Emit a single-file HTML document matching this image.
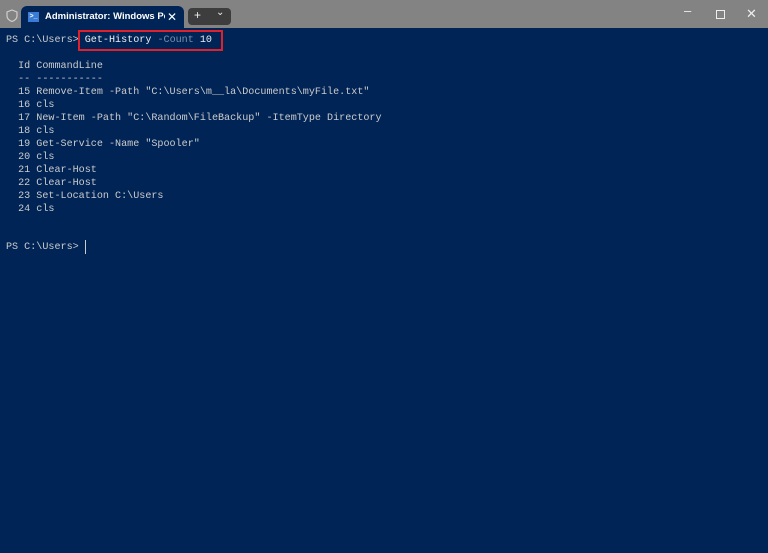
<!DOCTYPE html>
<html><head><style>
*{margin:0;padding:0;box-sizing:border-box}
body{width:768px;height:553px;overflow:hidden;background:#012456;font-family:"Liberation Mono",monospace;position:relative}
#tb{position:absolute;left:0;top:0;width:768px;height:28px;background:#838383}
#tab{position:absolute;left:21px;top:6px;width:163px;height:22px;background:#012456;border-radius:6px 6px 0 0;color:#fff;font:bold 9.5px "Liberation Sans",sans-serif;line-height:22px}
#tab .t{position:absolute;left:24px;top:0;width:120px;overflow:hidden;white-space:nowrap}
#tab .ic{position:absolute;left:7px;top:6px;width:11px;height:10px;background:#3a7bd5;color:#fff;font-size:7px;line-height:10px;text-align:center}
#tab .x{position:absolute;right:7px;top:0;font-weight:normal;font-size:12px}
#btns{position:absolute;left:188px;top:8px;width:43px;height:17px;background:#3d3d3d;border-radius:4px;color:#eee;font:12px "Liberation Sans",sans-serif}
.term{position:absolute;left:6px;color:#cccccc;font-size:10.1px;line-height:13px;white-space:pre}
#box{position:absolute;left:78px;top:30px;width:145px;height:21px;border:2px solid #e0202a}
.wc{position:absolute;top:6px;color:#eee;font:13px "Liberation Sans",sans-serif}
</style></head><body>
<div id="tb">
<svg style="position:absolute;left:6px;top:9px" width="12" height="13" viewBox="0 0 12 13"><path d="M6 1 L11 3 V7 C11 10 8.5 11.5 6 12.5 C3.5 11.5 1 10 1 7 V3 Z" fill="none" stroke="#cfcfcf" stroke-width="1.2"/></svg>
<div id="tab"><span class="ic">&gt;_</span><span class="t">Administrator: Windows Pow</span><span class="x">✕</span></div>
<div id="btns"><span style="position:absolute;left:6px;top:0">+</span><span style="position:absolute;left:28px;top:-1px;font-size:10px">⌄</span></div>
<div class="wc" style="left:684px;top:3px">–</div>
<div style="position:absolute;left:716px;top:10px;width:9px;height:9px;border:1px solid #eee"></div>
<div class="wc" style="left:746px;top:6px">✕</div>
</div>
<div class="term" style="top:34px">PS C:\Users&gt; <span style="color:#eee">Get-History</span> <span style="color:#7f8fa6">-Count</span> <span style="color:#eee">10</span></div>
<div id="box"></div>
<div class="term" style="top:60px">  Id CommandLine
  -- -----------
  15 Remove-Item -Path "C:\Users\m__la\Documents\myFile.txt"
  16 cls
  17 New-Item -Path "C:\Random\FileBackup" -ItemType Directory
  18 cls
  19 Get-Service -Name "Spooler"
  20 cls
  21 Clear-Host
  22 Clear-Host
  23 Set-Location C:\Users
  24 cls</div>
<div class="term" style="top:241px">PS C:\Users&gt; </div>
<div style="position:absolute;left:85px;top:240px;width:1px;height:14px;background:#ccc"></div>
</body></html>
